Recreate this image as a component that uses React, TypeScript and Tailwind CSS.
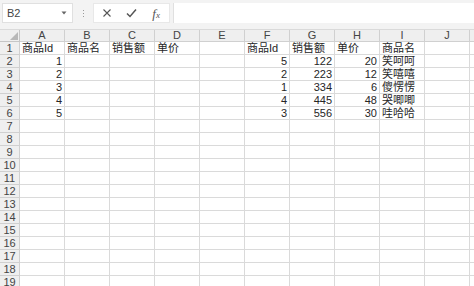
import React from "react";

const cols = ["A", "B", "C", "D", "E", "F", "G", "H", "I", "J"];

type Cell = { v: string; r?: boolean };
const data: Record<number, Record<string, Cell>> = {
  1: {
    A: { v: "商品Id" },
    B: { v: "商品名" },
    C: { v: "销售额" },
    D: { v: "单价" },
    F: { v: "商品Id" },
    G: { v: "销售额" },
    H: { v: "单价" },
    I: { v: "商品名" },
  },
};
const a = ["1", "2", "3", "4", "5"];
const f = ["5", "2", "1", "4", "3"];
const g = ["122", "223", "334", "445", "556"];
const h = ["20", "12", "6", "48", "30"];
const i = ["笑呵呵", "笑嘻嘻", "傻愣愣", "哭唧唧", "哇哈哈"];
for (let k = 0; k < 5; k++) {
  data[k + 2] = {
    A: { v: a[k], r: true },
    F: { v: f[k], r: true },
    G: { v: g[k], r: true },
    H: { v: h[k], r: true },
    I: { v: i[k] },
  };
}

const rows = Array.from({ length: 19 }, (_, k) => k + 1);

export default function App() {
  return (
    <div
      className="w-[474px] h-[286px] overflow-hidden bg-white text-[11px] text-[#262626]"
      style={{ fontFamily: '"Liberation Sans", "Noto Sans CJK SC", sans-serif' }}
    >
      {/* toolbar */}
      <div className="h-[30px] bg-[#f3f3f3] flex items-start pt-[3px] border-b border-[#dadada]">
        <div className="ml-[2px] w-[71px] h-[20px] bg-white border border-[#e0e0e0] flex items-center justify-between pl-[4px] pr-[5px]">
          <span className="text-[11px] text-[#444]">B2</span>
          <svg width="6" height="4" viewBox="0 0 6 4">
            <path d="M0.5 0.5 L3 3.5 L5.5 0.5 Z" fill="#666" />
          </svg>
        </div>
        <div className="w-[20px] h-[20px] flex flex-col items-center justify-center gap-[2px]">
          <div className="w-[1px] h-[1px] bg-[#999]" />
          <div className="w-[1px] h-[1px] bg-[#999]" />
          <div className="w-[1px] h-[1px] bg-[#999]" />
        </div>
        <div className="w-[77px] h-[20px] bg-white border border-[#e8e8e8] flex items-center">
          <div className="w-[26px] flex justify-center">
            <svg width="10" height="10" viewBox="0 0 10 10">
              <path d="M1.5 1.5 L8.5 8.5 M8.5 1.5 L1.5 8.5" stroke="#555" strokeWidth="1.1" />
            </svg>
          </div>
          <div className="w-[24px] flex justify-center">
            <svg width="11" height="10" viewBox="0 0 11 10">
              <path d="M1 5.5 L4 8.5 L10 1.5" stroke="#555" strokeWidth="1.5" fill="none" />
            </svg>
          </div>
          <div className="w-[26px] flex justify-center">
            <span
              className="italic text-[13px] leading-none text-[#555]"
              style={{ fontFamily: '"Liberation Serif", serif' }}
            >
              f<span className="text-[9px]">x</span>
            </span>
          </div>
        </div>
        <div className="ml-[3px] flex-1 h-[20px] bg-white border-l border-[#e0e0e0]" />
      </div>

      {/* grid */}
      <div className="grid grid-cols-[20px_repeat(10,45px)_1fr]">
        <div className="h-[12px] bg-[#efefef] border-r border-b border-[#c6c6c6] relative">
          <svg className="absolute right-[1px] bottom-[1px]" width="8" height="8" viewBox="0 0 8 8">
            <path d="M8 0 L8 8 L0 8 Z" fill="#b8b8b8" />
          </svg>
        </div>
        {cols.map((c) => (
          <div
            key={c}
            className="h-[12px] bg-[#efefef] border-r border-b border-[#d0d0d0] flex items-center justify-center text-[11px] leading-none text-[#444]"
          >
            {c}
          </div>
        ))}
        <div className="h-[12px] bg-[#efefef] border-b border-[#d0d0d0]" />
        {rows.map((r) => (
          <React.Fragment key={r}>
            <div className="h-[13px] bg-[#efefef] border-r border-b border-[#d0d0d0] flex items-center justify-center text-[11px] leading-none text-[#444]">
              {r}
            </div>
            {cols.map((c) => {
              const cell = data[r]?.[c];
              return (
                <div
                  key={c}
                  className={`h-[13px] border-r border-b border-[#dadada] flex items-center px-[2px] leading-none whitespace-nowrap overflow-visible ${
                    cell?.r ? "justify-end" : "justify-start"
                  }`}
                >
                  {cell?.v ?? ""}
                </div>
              );
            })}
            <div className="h-[13px] border-b border-[#dadada]" />
          </React.Fragment>
        ))}
      </div>
    </div>
  );
}
